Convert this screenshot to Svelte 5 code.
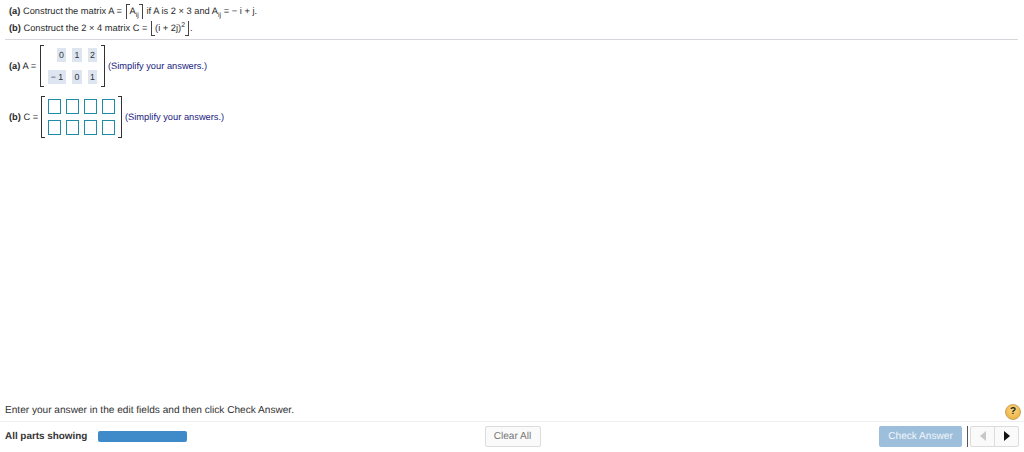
<script lang="ts">
	const rowsA = [
		['0', '1', '2'],
		['− 1', '0', '1']
	];
	const rowsC = [0, 1];
	const colsC = [0, 1, 2, 3];
</script>

<div class="page">
	<div class="question">
		<div class="line">
			<b>(a)</b> Construct the matrix A = <span class="delim ceil">A<sub>ij</sub></span> if A is 2 × 3 and A<sub>ij</sub> = − i + j.
		</div>
		<div class="line">
			<b>(b)</b> Construct the 2 × 4 matrix C = <span class="delim floor">(i + 2j)<sup>2</sup></span>.
		</div>
	</div>

	<div class="answers">
		<div class="answer">
			<span class="label"><b>(a)</b> A =</span>
			<div class="bracket grid-a">
				{#each rowsA as row}
					{#each row as val}
						<span class="cell">{val}</span>
					{/each}
				{/each}
			</div>
			<span class="hint">(Simplify your answers.)</span>
		</div>

		<div class="answer answer-b">
			<span class="label"><b>(b)</b> C =</span>
			<div class="bracket grid-c">
				{#each rowsC as r}
					{#each colsC as c}
						<span class="box"></span>
					{/each}
				{/each}
			</div>
			<span class="hint">(Simplify your answers.)</span>
		</div>
	</div>

	<div class="footer">
		<div class="instruction">
			<span>Enter your answer in the edit fields and then click Check Answer.</span>
			<span class="help">?</span>
		</div>
		<div class="toolbar">
			<div class="parts">
				<b>All parts showing</b>
				<span class="progress"></span>
			</div>
			<button class="clear">Clear All</button>
			<div class="actions">
				<button class="check">Check Answer</button>
				<span class="sep"></span>
				<div class="nav">
					<span class="nav-btn"><span class="arrow prev"></span></span>
					<span class="nav-btn"><span class="arrow next"></span></span>
				</div>
			</div>
		</div>
	</div>
</div>

<style>
	:global(body) {
		margin: 0;
		background: #fff;
	}

	.page {
		width: 1024px;
		height: 452px;
		display: flex;
		flex-direction: column;
		font-family: "Liberation Sans", Arial, sans-serif;
		font-size: 9.3px;
		color: #2b2b2b;
		text-rendering: geometricPrecision;
		overflow: hidden;
	}

	.question {
		margin: 0 6px 0 5px;
		padding: 3px 0 0 4px;
		height: 36px;
		border-bottom: 1px solid #d6d6dc;
	}

	.line {
		white-space: nowrap;
		height: 17px;
		line-height: 17px;
	}

	sub, sup {
		font-size: 7px;
		line-height: 0;
	}

	.delim {
		display: inline-block;
		margin: 0 1px;
		padding: 0 3px;
		height: 15px;
		line-height: 15px;
		vertical-align: middle;
		border-left: 1px solid #444;
		border-right: 1px solid #444;
	}

	.ceil {
		background:
			linear-gradient(#444, #444) 0 0 / 3px 1px no-repeat,
			linear-gradient(#444, #444) 100% 0 / 3px 1px no-repeat;
	}

	.floor {
		background:
			linear-gradient(#444, #444) 0 100% / 3px 1px no-repeat,
			linear-gradient(#444, #444) 100% 100% / 3px 1px no-repeat;
	}

	.answers {
		flex: 1;
		padding: 5px 0 0 9px;
		display: flex;
		flex-direction: column;
		gap: 9px;
	}

	.answer {
		display: flex;
		align-items: center;
		white-space: nowrap;
	}

	.label {
		width: 31px;
		flex: none;
	}

	.answer-b .label {
		width: 32px;
	}

	.bracket {
		box-sizing: border-box;
		height: 42px;
		border-left: 1px solid #333;
		border-right: 1px solid #333;
		display: grid;
		align-content: space-between;
		background:
			linear-gradient(#333, #333) 0 0 / 3px 1px no-repeat,
			linear-gradient(#333, #333) 100% 0 / 3px 1px no-repeat,
			linear-gradient(#333, #333) 0 100% / 3px 1px no-repeat,
			linear-gradient(#333, #333) 100% 100% / 3px 1px no-repeat;
	}

	.grid-a {
		width: 65px;
		grid-template-columns: 18px 10px 9px;
		grid-auto-rows: 14px;
		column-gap: 6px;
		justify-content: end;
		padding: 3px 7px 3px 0;
	}

	.cell {
		background: #dde5f1;
		font-size: 8.8px;
		color: #333;
		display: flex;
		align-items: center;
		justify-content: center;
	}

	.cell:nth-child(1) {
		width: 9px;
		justify-self: end;
	}

	.grid-c {
		width: 81px;
		grid-template-columns: repeat(4, 13px);
		grid-auto-rows: 15px;
		column-gap: 5px;
		justify-content: center;
		padding: 3px 0;
	}

	.box {
		box-sizing: border-box;
		border: 1px solid #1f8ba6;
	}

	.hint {
		margin-left: 3px;
		color: #1a1a80;
	}

	.footer {
		flex: none;
	}

	.instruction {
		height: 21px;
		margin: 0 3px 0 5px;
		display: flex;
		align-items: center;
		justify-content: space-between;
		font-size: 10.1px;
		color: #333;
	}

	.help {
		width: 16px;
		height: 16px;
		margin-top: 2px;
		border-radius: 50%;
		background: radial-gradient(circle at 50% 35%, #fbd77f, #e9a936);
		border: 1px solid #c9a45a;
		box-sizing: border-box;
		color: #222;
		font-weight: bold;
		font-size: 10px;
		display: flex;
		align-items: center;
		justify-content: center;
	}

	.toolbar {
		height: 31px;
		border-top: 1px solid #efefef;
		display: grid;
		grid-template-columns: 1fr auto 1fr;
		align-items: center;
		padding: 0 5px 2px 5px;
		box-sizing: border-box;
	}

	.parts {
		display: flex;
		align-items: center;
		gap: 11px;
		font-size: 9.9px;
		color: #333;
	}

	.progress {
		width: 89px;
		height: 11px;
		background: #3f8ac9;
		border-radius: 2px;
	}

	button {
		font-family: inherit;
		font-size: 10.1px;
		border-radius: 2px;
		padding: 0;
		height: 21px;
		text-rendering: geometricPrecision;
	}

	.clear {
		width: 56px;
		margin-left: 1px;
		background: #fafafa;
		border: 1px solid #dcdcdc;
		color: #777;
	}

	.actions {
		justify-self: end;
		display: flex;
		align-items: center;
	}

	.check {
		width: 83px;
		background: #9dbfdc;
		border: none;
		color: #f2f6fa;
	}

	.sep {
		width: 1px;
		height: 21px;
		background: #555;
		margin: 0 2px 0 5px;
	}

	.nav {
		display: flex;
		width: 49px;
		height: 21px;
		border: 1px solid #dcdcdc;
		border-radius: 2px;
		box-sizing: border-box;
		background: #fafafa;
	}

	.nav-btn {
		flex: 1;
		display: flex;
		align-items: center;
		justify-content: center;
	}

	.nav-btn + .nav-btn {
		border-left: 1px solid #dcdcdc;
	}

	.arrow {
		width: 0;
		height: 0;
		border-top: 5px solid transparent;
		border-bottom: 5px solid transparent;
	}

	.prev {
		border-right: 6px solid #c8c8c8;
	}

	.next {
		border-left: 6px solid #111;
	}
</style>
